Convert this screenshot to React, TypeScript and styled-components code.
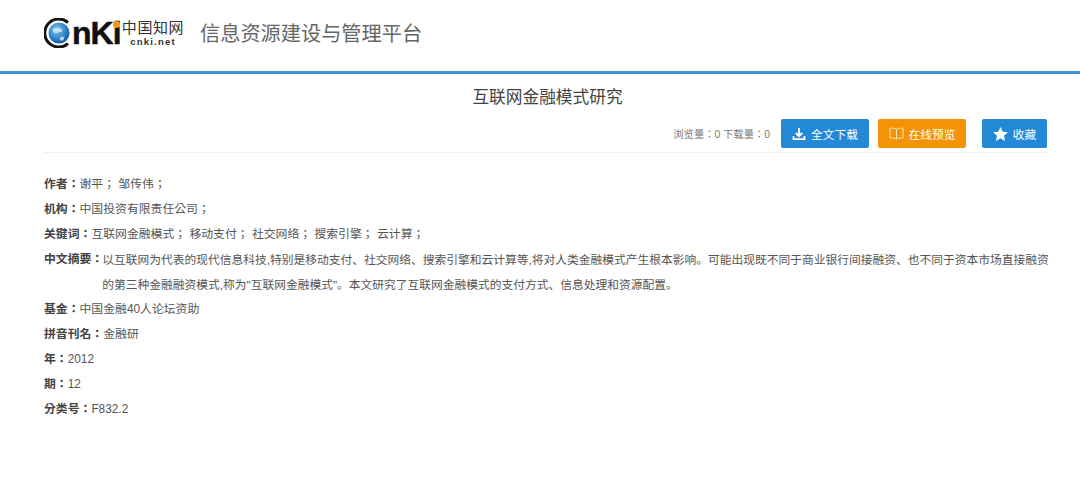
import styled, { createGlobalStyle } from 'styled-components';

const GlobalStyle = createGlobalStyle`
  html, body {
    margin: 0;
    padding: 0;
    background: #fff;
    font-family: "Liberation Sans", "Noto Sans CJK SC", sans-serif;
  }
`;

const Header = styled.header`
  height: 71px;
  border-bottom: 3px solid #3d92dd;
  padding-left: 44px;
  display: flex;
  align-items: center;
`;

const Logo = styled.div`
  display: flex;
  align-items: center;
  width: 139px;
  height: 30px;
  margin-top: -5px;
`;

const LettersWrap = styled.div`
  position: relative;
  display: flex;
  flex: none;
  width: 50px;
`;

const LogoLetters = styled.span`
  font-family: "Liberation Sans", sans-serif;
  font-weight: 700;
  font-size: 32px;
  line-height: 30px;
  letter-spacing: -1px;
  color: #111;
  -webkit-text-stroke: 0.5px #111;
`;

const Dot = styled.i`
  position: absolute;
  top: 3px;
  left: 41px;
  width: 7px;
  height: 7px;
  border-radius: 50%;
  background: #f39a13;
`;

const LogoSide = styled.div`
  display: flex;
  flex: none;
  flex-direction: column;
  align-items: center;
  width: 62px;
  margin-top: -3px;
`;

const LogoCn = styled.span`
  font-family: "Noto Sans CJK SC", sans-serif;
  font-size: 15px;
  line-height: 21px;
  letter-spacing: 0.6px;
  color: #333;
  white-space: nowrap;
`;

const LogoUrl = styled.span`
  font-size: 9.5px;
  font-weight: 700;
  line-height: 10px;
  letter-spacing: 1.2px;
  color: #333;
`;

const PlatformName = styled.h1`
  margin: -3px 0 0 17px;
  font-size: 20.2px;
  line-height: 28px;
  font-weight: 400;
  color: #666;
`;

const Main = styled.main`
  padding: 0 33px 0 44px;
`;

const Title = styled.h2`
  margin: 0;
  padding: 12px 0 0 4px;
  font-size: 16.7px;
  line-height: 24px;
  font-weight: 400;
  color: #444;
  text-align: center;
`;

const Toolbar = styled.div`
  display: flex;
  justify-content: flex-end;
  align-items: center;
  height: 29px;
  margin-top: 9px;
  padding-bottom: 4px;
  border-bottom: 1px solid #f0f0f0;
`;

const Stats = styled.span`
  font-family: "Liberation Sans", "Noto Sans CJK TC", sans-serif;
  font-size: 10.3px;
  color: #777;
  margin-right: 2px;
`;

const ActionButton = styled.button<{ $color: string; $width: number; $gap?: number }>`
  display: flex;
  align-items: center;
  justify-content: center;
  gap: 5px;
  width: ${(props) => props.$width}px;
  height: 29px;
  margin-left: ${(props) => props.$gap ?? 9}px;
  padding: 0;
  border: none;
  border-radius: 2px;
  background: ${(props) => props.$color};
  color: #fff;
  font-family: inherit;
  font-size: 11.7px;
`;

const Details = styled.div`
  margin: 19px -3px 0 0;
`;

const Row = styled.div`
  display: flex;
  font-size: 11.85px;
  line-height: 25px;
  color: #555;
`;

const Label = styled.span`
  flex: none;
  font-family: "Liberation Sans", "Noto Sans CJK TC", sans-serif;
  font-weight: 700;
  color: #444;
`;

const Value = styled.span`
  flex: 1;
  font-family: "Liberation Sans", "Noto Sans CJK TC", sans-serif;
`;

const Abstract = styled(Value)`
  font-family: "Liberation Sans", "Noto Sans CJK SC", sans-serif;
  font-size: 11.75px;
  margin-left: -1px;
`;

const Logotype = () => (
  <svg width="28" height="30" viewBox="0 0 28 30" style={{ flex: 'none' }}>
    <defs>
      <radialGradient id="globe" cx="40%" cy="35%" r="70%">
        <stop offset="0%" stopColor="#8cc6ee" />
        <stop offset="60%" stopColor="#2f86cb" />
        <stop offset="100%" stopColor="#0f4f96" />
      </radialGradient>
    </defs>
    <path d="M24 4.500A14 14 0 1 0 24 25.500" fill="none" stroke="#111" strokeWidth="3" />
    <circle cx="15" cy="15" r="10.500" fill="url(#globe)" />
    <path d="M9 11c3-2 6-1 8 0s2 3-1 3-3 2-5 1-3-2-2-4zM17 19c2-1 4 0 3 2s-3 2-4 1 0-2 1-3z" fill="#d6ecfa" opacity="0.8" />
  </svg>
);

const DownloadIcon = () => (
  <svg width="14" height="14" viewBox="0 0 14 14" fill="none" stroke="#fff" strokeWidth="1.8">
    <path d="M7 1v8M3.800 6 7 9.200 10.200 6M1.500 9v3.200h11V9" />
  </svg>
);

const BookIcon = () => (
  <svg width="15" height="13" viewBox="0 0 15 13" fill="none" stroke="#fde3b8" strokeWidth="1">
    <path d="M7.500 2.500C6 1.300 3.500 1 1 1.200V11c2.500-.2 5 .1 6.500 1 1.500-.9 4-1.200 6.500-1V1.200C11.500 1 9 1.300 7.500 2.500zM7.500 2.500V12" />
  </svg>
);

const StarIcon = () => (
  <svg width="15" height="14" viewBox="0 0 15 14" fill="#fff">
    <path d="M7.500 0l2.200 4.700 5.100.6-3.800 3.500 1 5.100-4.500-2.600-4.500 2.600 1-5.100L.2 5.300l5.100-.6z" />
  </svg>
);

export default function App() {
  return (
    <>
      <GlobalStyle />
      <Header>
        <Logo>
          <Logotype />
          <LettersWrap>
            <LogoLetters>nKi</LogoLetters>
            <Dot />
          </LettersWrap>
          <LogoSide>
            <LogoCn>中国知网</LogoCn>
            <LogoUrl>cnki.net</LogoUrl>
          </LogoSide>
        </Logo>
        <PlatformName>信息资源建设与管理平台</PlatformName>
      </Header>
      <Main>
        <Title>互联网金融模式研究</Title>
        <Toolbar>
          <Stats>浏览量：0 下载量：0</Stats>
          <ActionButton $color="#2389d7" $width={88}>
            <DownloadIcon />
            全文下载
          </ActionButton>
          <ActionButton $color="#f49306" $width={88}>
            <BookIcon />
            在线预览
          </ActionButton>
          <ActionButton $color="#2389d7" $width={65} $gap={16}>
            <StarIcon />
            收藏
          </ActionButton>
        </Toolbar>
        <Details>
          <Row>
            <Label>作者：</Label>
            <Value>谢平； 邹传伟；</Value>
          </Row>
          <Row>
            <Label>机构：</Label>
            <Value>中国投资有限责任公司；</Value>
          </Row>
          <Row>
            <Label>关键词：</Label>
            <Value>互联网金融模式； 移动支付； 社交网络； 搜索引擎； 云计算；</Value>
          </Row>
          <Row>
            <Label>中文摘要：</Label>
            <Abstract>
              以互联网为代表的现代信息科技,特别是移动支付、社交网络、搜索引擎和云计算等,将对人类金融模式产生根本影响。可能出现既不同于商业银行间接融资、也不同于资本市场直接融资的第三种金融融资模式,称为"互联网金融模式"。本文研究了互联网金融模式的支付方式、信息处理和资源配置。
            </Abstract>
          </Row>
          <Row>
            <Label>基金：</Label>
            <Value>中国金融40人论坛资助</Value>
          </Row>
          <Row>
            <Label>拼音刊名：</Label>
            <Value>金融研</Value>
          </Row>
          <Row>
            <Label>年：</Label>
            <Value>2012</Value>
          </Row>
          <Row>
            <Label>期：</Label>
            <Value>12</Value>
          </Row>
          <Row>
            <Label>分类号：</Label>
            <Value>F832.2</Value>
          </Row>
        </Details>
      </Main>
    </>
  );
}
